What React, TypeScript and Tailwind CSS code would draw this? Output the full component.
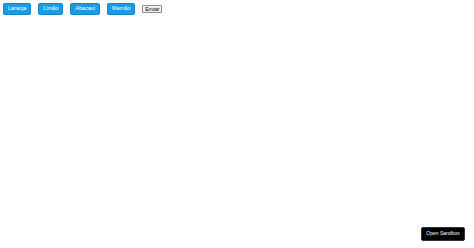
const FRUITS = ['Laranja', 'Limão', 'Abacaxi', 'Mamão'];

export default function App() {
  return (
    <div className="min-h-[248px] bg-white" style={{ fontFamily: 'Arial, "Liberation Sans", sans-serif' }}>
      <div className="flex items-center gap-[7px] pl-[3px] pt-[3px]">
        {FRUITS.map((fruit) => (
          <button
            key={fruit}
            className="h-[12px] px-[4px] rounded-[2px] bg-[#1a9be3] border border-[#1386c8] text-white text-[5.5px] leading-none"
          >
            {fruit}
          </button>
        ))}
        <button className="h-[8px] px-[2px] rounded-[1px] bg-[#efefef] border border-[#8f8f8f] text-black text-[5px] leading-none">
          Enviar
        </button>
      </div>

      {/* botão fixo do sandbox */}
      <div className="fixed right-[9px] bottom-[7px] h-[14px] w-[44px] flex items-center justify-center rounded-[2px] bg-black text-white text-[5px] border border-[#333]">
        Open Sandbox
      </div>
    </div>
  );
}
